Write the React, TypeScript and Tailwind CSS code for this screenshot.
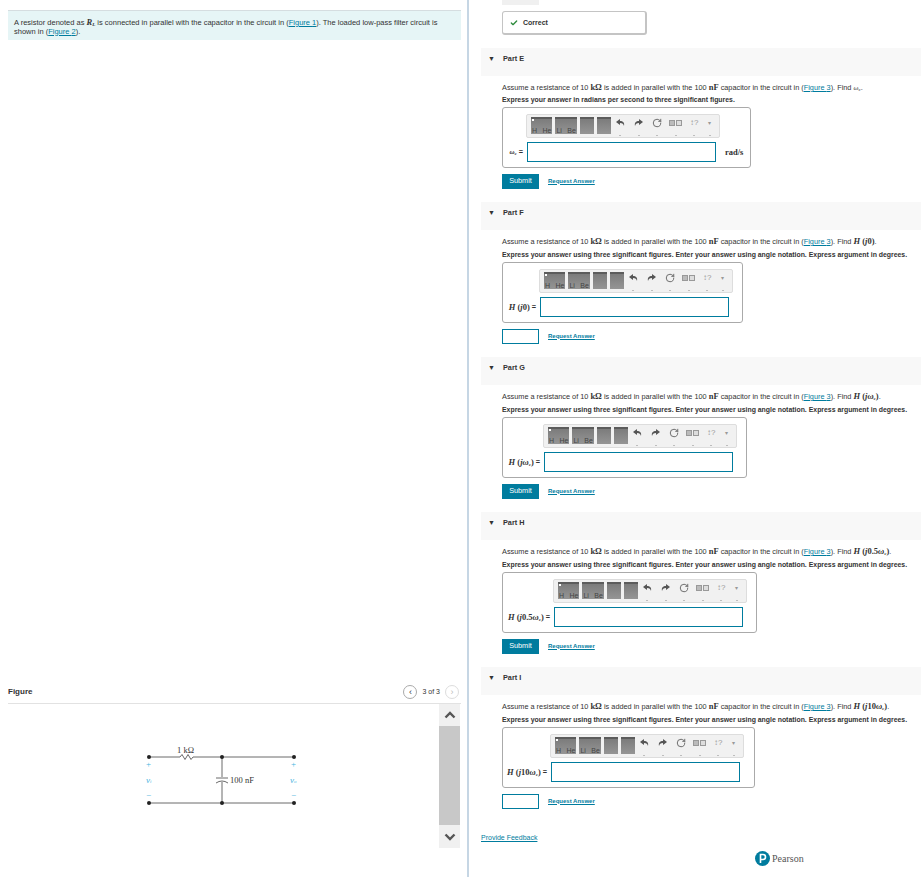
import React from "react";
import { RotateCw, Check } from "lucide-react";

const Fig = ({ n }: { n: number }) => (
  <>(<a className="text-[#007c9e] underline">Figure {n}</a>)</>
);
const Wc = () => (
  <span className="font-['Liberation_Serif'] italic text-[7px]">ω<sub className="text-[5px] not-italic leading-none">c</sub></span>
);
const M = ({ children }: { children: React.ReactNode }) => (
  <span className="font-['Liberation_Serif'] font-bold text-[8.5px] text-[#333]">{children}</span>
);

const Tool = ({ children }: { children: React.ReactNode }) => (
  <div className="flex w-[18.500px] flex-col items-center">
    <div className="flex h-[11px] items-center justify-center">{children}</div>
    <div className="mt-[7px] h-[1px] w-[2px] bg-[#bdbdbd]" />
  </div>
);

const Toolbar = () => (
  <div className="flex h-[24px] w-[194px] items-start gap-[3px] rounded-[2px] border border-[#dddddd] bg-[#f1f1f1] pl-[4px] pt-[2px]">
    <div className="flex h-[17px] w-[24px] flex-col justify-between border-t-2 border-[#5c5c5c] bg-gradient-to-b from-[#7c7c7c] to-[#959595] px-[1px]">
      <div className="h-[2px] w-[2px] bg-white" />
      <div className="flex justify-between text-[7px] leading-[7px] text-[#444]"><span>H</span><span>He</span></div>
    </div>
    <div className="flex h-[17px] w-[24px] flex-col justify-end border-t-2 border-[#5c5c5c] bg-gradient-to-b from-[#7c7c7c] to-[#959595] px-[1px]">
      <div className="flex justify-between text-[7px] leading-[7px] text-[#444]"><span>Li</span><span>Be</span></div>
    </div>
    <div className="h-[17px] w-[16px] border-t-2 border-[#5c5c5c] bg-gradient-to-b from-[#7c7c7c] to-[#959595]" />
    <div className="h-[17px] w-[16px] border-t-2 border-[#5c5c5c] bg-gradient-to-b from-[#7c7c7c] to-[#959595]" />
    <div className="ml-[-3px] flex text-[#555]">
      <Tool>
        <svg width="9" height="9" viewBox="0 0 9 9"><path d="M4 1 0 4l4 3V5c2.500 0 3.500 1 4 3 .8-3.500-1-5-4-5z" fill="#555" /></svg>
      </Tool>
      <Tool>
        <svg width="9" height="9" viewBox="0 0 9 9"><path d="M5 1l4 3-4 3V5c-2.500 0-3.500 1-4 3-.8-3.500 1-5 4-5z" fill="#555" /></svg>
      </Tool>
      <Tool><RotateCw size={10} strokeWidth={2} /></Tool>
      <Tool>
        <div className="flex gap-[1px]">
          <div className="h-[6px] w-[6px] border border-[#999] bg-[#bbb]" />
          <div className="h-[6px] w-[6px] border border-[#999] bg-[#ddd]" />
        </div>
      </Tool>
      <Tool><span className="text-[8px] leading-none text-[#999]">↕?</span></Tool>
      <div className="ml-[-3px]">
        <Tool><span className="text-[6px] leading-none text-[#999]">▾</span></Tool>
      </div>
    </div>
  </div>
);

type Part = {
  name: string;
  find: React.ReactNode;
  hint: string;
  label: React.ReactNode;
  unit?: string;
  boxW: number;
  inputMl: number;
  submit: boolean;
  height: number;
  hintGap: boolean;
};

const angle = "Express your answer using three significant figures. Enter your answer using angle notation. Express argument in degrees.";

const parts: Part[] = [
  { name: "Part E", find: <> Find <Wc />.</>, hint: "Express your answer in radians per second to three significant figures.", label: <Wc />, unit: "rad/s", boxW: 249, inputMl: 25, submit: true, height: 154, hintGap: false },
  { name: "Part F", find: <> Find <M><i>H</i> (<i>j</i>0)</M>.</>, hint: angle, label: <M><i>H</i> (<i>j</i>0)</M>, boxW: 241, inputMl: 38, submit: false, height: 155, hintGap: true },
  { name: "Part G", find: <> Find <M><i>H</i> (<i>jω</i><sub className="text-[5px]">c</sub>)</M>.</>, hint: angle, label: <M><i>H</i> (<i>jω</i><sub className="text-[5px]">c</sub>)</M>, boxW: 245, inputMl: 42, submit: true, height: 155, hintGap: true },
  { name: "Part H", find: <> Find <M><i>H</i> (<i>j</i>0.5<i>ω</i><sub className="text-[5px]">c</sub>)</M>.</>, hint: angle, label: <M><i>H</i> (<i>j</i>0.5<i>ω</i><sub className="text-[5px]">c</sub>)</M>, boxW: 255, inputMl: 52, submit: true, height: 155, hintGap: true },
  { name: "Part I", find: <> Find <M><i>H</i> (<i>j</i>10<i>ω</i><sub className="text-[5px]">c</sub>)</M>.</>, hint: angle, label: <M><i>H</i> (<i>j</i>10<i>ω</i><sub className="text-[5px]">c</sub>)</M>, boxW: 253, inputMl: 49, submit: false, height: 155, hintGap: true },
];

const PartBlock = ({ p }: { p: Part }) => (
  <section className="flex flex-col" style={{ height: p.height }}>
    <div className="flex h-[28px] shrink-0 items-center bg-[#f8f8f8] pb-[6px] pl-[7px]">
      <span className="w-[15px] text-[7px] text-[#333]">▼</span>
      <span className="text-[7.3px] font-bold text-[#333]">{p.name}</span>
    </div>
    <div className="pl-[21px]">
      <p className="mt-[5px] h-[12px] whitespace-nowrap text-[7.33px] leading-[12px] text-[#333]">
        Assume a resistance of 10 <M>kΩ</M> is added in parallel with the 100 <M>nF</M> capacitor in the circuit in <Fig n={3} />.{p.find}
      </p>
      <p className={`${p.hintGap ? "mt-[2px]" : "mt-[1px]"} h-[12px] whitespace-nowrap text-[6.9px] font-bold leading-[12px] text-[#333]`}>{p.hint}</p>
      <div className="mt-[1px] h-[61px] rounded-[3px] border border-[#aaaaaa] pt-[6px]" style={{ width: p.boxW }}>
        <div style={{ marginLeft: p.inputMl - 2 }}><Toolbar /></div>
        <div className="mt-[4px] flex items-center">
          <div className="flex items-center justify-end gap-[2px] pr-[4px] text-[7.3px] font-bold text-[#333]" style={{ width: p.inputMl - 1 }}>
            {p.label}<span>=</span>
          </div>
          <div className="h-[20px] w-[189px] border border-[#007c9e] bg-white" />
          {p.unit && <span className="ml-[9px] font-['Liberation_Serif'] text-[8.5px] font-bold text-[#333]">{p.unit}</span>}
        </div>
      </div>
      <div className="mt-[6px] flex items-center gap-[9px]">
        {p.submit ? (
          <div className="flex h-[15px] w-[37px] items-center justify-center bg-[#007c9e] text-[7.3px] text-white">Submit</div>
        ) : (
          <div className="h-[15px] w-[37px] border border-[#007c9e] bg-white" />
        )}
        <a className="-mt-[1px] text-[6px] font-bold text-[#007c9e] underline">Request Answer</a>
      </div>
    </div>
  </section>
);

const Circuit = () => (
  <svg width="220" height="90" viewBox="0 0 220 90" className="font-['Liberation_Serif']">
    <g stroke="#444" strokeWidth="0.8" fill="none">
      <path d="M49 27H80l2-2.500 3 5 3-5 3 5 2-2.500H194M49 73H194" />
      <path d="M122 27V47M122 52V73M116 48H128M116 53Q122 49 128 53" />
    </g>
    <g fill="#222">
      <circle cx="49" cy="27" r="2" /><circle cx="122" cy="27" r="2" /><circle cx="194" cy="27" r="2" />
      <circle cx="49" cy="73" r="2" /><circle cx="122" cy="73" r="2" /><circle cx="194" cy="73" r="2" />
    </g>
    <g fontSize="8.500" fill="#333">
      <text x="77" y="23">1 kΩ</text>
      <text x="130" y="53">100 nF</text>
    </g>
    <g fontSize="9" fill="#45b4e0" fontStyle="italic">
      <text x="46" y="37" fontStyle="normal">+</text>
      <text x="46" y="53">v<tspan fontSize="5">i</tspan></text>
      <text x="46" y="68" fontStyle="normal">−</text>
      <text x="191" y="37" fontStyle="normal">+</text>
      <text x="190" y="53">v<tspan fontSize="5">o</tspan></text>
      <text x="191" y="68" fontStyle="normal">−</text>
    </g>
  </svg>
);

export default function App() {
  return (
    <div className="flex h-[877px] w-[921px] overflow-hidden bg-white font-['Liberation_Sans',Arial,sans-serif] text-[#333]">
      <div className="flex w-[467px] shrink-0 flex-col pl-[8px] pt-[10px]">
        <div className="h-[30px] w-[453px] border-t border-[#d5dde0] bg-[#e6f5f6] pl-[6px] pr-[18px] pt-[7px] text-[7.5px] leading-[8.5px]">
          A resistor denoted as <span className="font-['Liberation_Serif'] italic font-bold text-[8.5px]">R<sub className="text-[5px]">L</sub></span> is connected in parallel with the capacitor in the circuit in <Fig n={1} />. The loaded low-pass filter circuit is shown in <Fig n={2} />.
        </div>
        <div className="flex-1" />
        <div className="flex h-[26px] w-[453px] items-center justify-between border-b border-[#e2e2e2] pr-[2px] pt-[3px]">
          <span className="text-[8px] font-bold text-[#333]">Figure</span>
          <div className="flex items-center gap-[5px] text-[7px]">
            <span className="flex h-[14px] w-[14px] items-center justify-center rounded-full border border-[#aaa] text-[9px] leading-none">‹</span>
            <span>3 of 3</span>
            <span className="flex h-[14px] w-[14px] items-center justify-center rounded-full border border-[#ddd] text-[9px] leading-none text-[#bbb]">›</span>
          </div>
        </div>
        <div className="mb-[29px] flex h-[144px] w-[452px]">
          <div className="flex-1 pl-[92px] pt-[26px]"><Circuit /></div>
          <div className="flex w-[21px] flex-col bg-[#f0f0f0]">
            <div className="flex h-[22px] items-center justify-center">
              <svg width="12" height="8" viewBox="0 0 12 8"><path d="M1.500 6.500 6 2l4.500 4.500" fill="none" stroke="#555" strokeWidth="2.400" /></svg>
            </div>
            <div className="flex-1 bg-[#c8c8c8]" />
            <div className="flex h-[23px] items-center justify-center">
              <svg width="12" height="8" viewBox="0 0 12 8"><path d="M1.500 1.500 6 6l4.500-4.500" fill="none" stroke="#555" strokeWidth="2.400" /></svg>
            </div>
          </div>
        </div>
      </div>
      <div className="w-[2px] shrink-0 bg-[#c6d6e4]" />
      <div className="min-w-0 flex-1 pl-[12px]">
        <div className="ml-[21px] h-[5px] w-[37px] bg-[#f0f0f0]" />
        <div className="ml-[21px] mt-[6px] flex h-[24px] w-[145px] items-center gap-[5px] rounded-[3px] border border-b-2 border-r-2 border-[#c4c4c4] pl-[7px] pt-[1px] text-[7px] font-bold">
          <Check size={8} strokeWidth={4} className="text-[#2e8b3d]" />
          <span>Correct</span>
        </div>
        <div className="h-[13px]" />
        {parts.map((p) => <PartBlock key={p.name} p={p} />)}
        <a className="mt-[11px] block text-[7px] text-[#007c9e] underline">Provide Feedback</a>
        <div className="ml-[274px] mt-[7px] flex items-center gap-[2px]">
          <svg width="15" height="15" viewBox="0 0 15 15">
            <circle cx="7.500" cy="7.500" r="7.500" fill="#007c9e" />
            <path d="M5.500 12V3.500h2.500a2.500 2.500 0 0 1 0 5H6" fill="none" stroke="#fff" strokeWidth="1.600" />
          </svg>
          <span className="font-['Liberation_Serif'] text-[10px] text-[#555]">Pearson</span>
        </div>
      </div>
    </div>
  );
}
